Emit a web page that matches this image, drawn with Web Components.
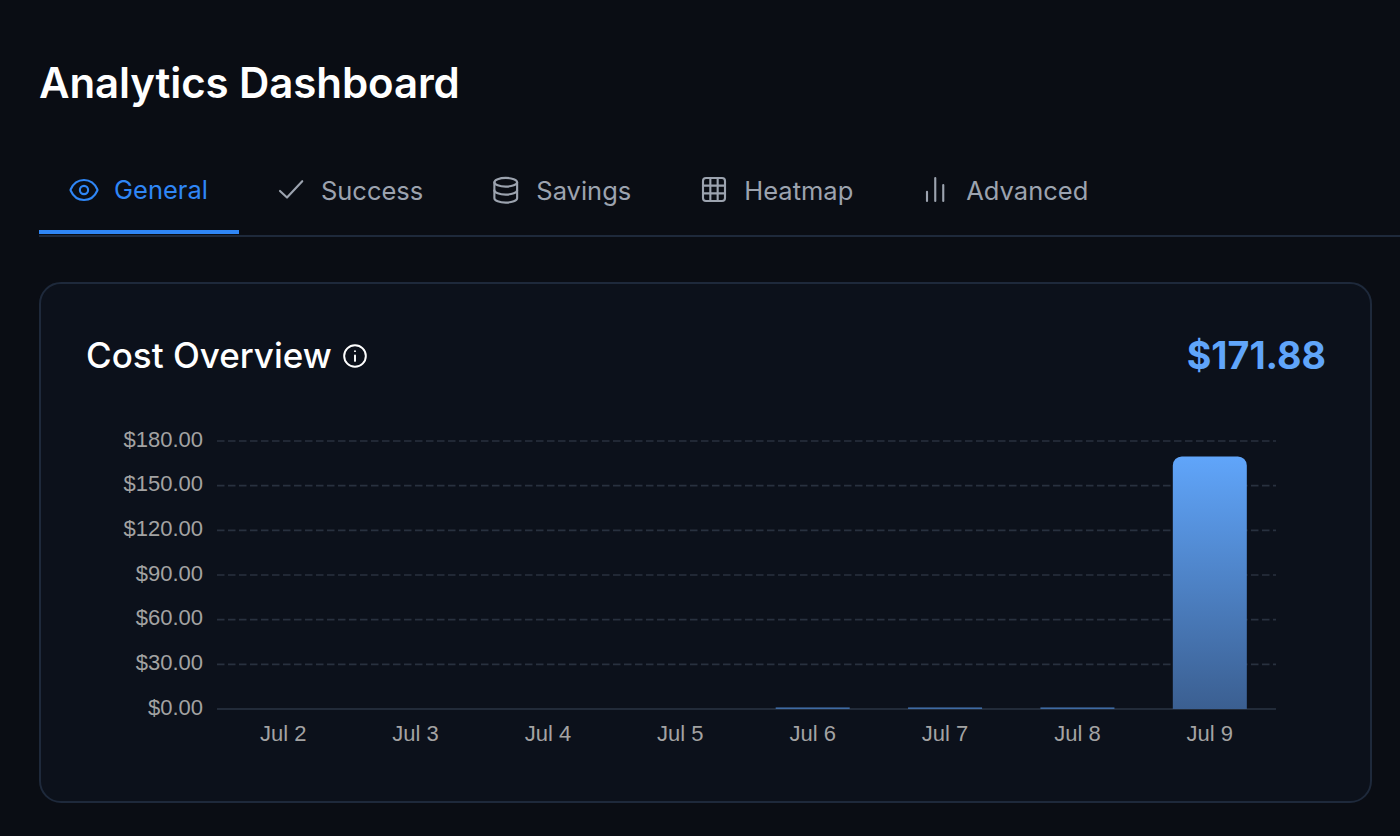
<!DOCTYPE html>
<html lang="en">
<head>
<meta charset="utf-8">
<title>Analytics Dashboard</title>
<style>
  html, body { margin: 0; background: #0a0d14; }
  body { font-family: Inter, "Liberation Sans", sans-serif; overflow: hidden; }
</style>
</head>
<body>
<dash-app>
  <span slot="title">Analytics Dashboard</span>
  <dash-tab slot="tabs" icon="eye" active>General</dash-tab>
  <dash-tab slot="tabs" icon="check">Success</dash-tab>
  <dash-tab slot="tabs" icon="database">Savings</dash-tab>
  <dash-tab slot="tabs" icon="table">Heatmap</dash-tab>
  <dash-tab slot="tabs" icon="bars">Advanced</dash-tab>
  <dash-card total="$171.88">
    <span slot="title">Cost Overview</span>
    <cost-chart></cost-chart>
  </dash-card>
</dash-app>

<script>
const ICONS = {
  eye: '<path d="M1.3 12.4a1 1 0 0 1 0-.8C3.2 7.3 7.2 4 12 4s8.8 3.3 10.7 7.6a1 1 0 0 1 0 .8C20.8 16.7 16.8 20 12 20s-8.8-3.3-10.7-7.6Z"/><circle cx="12" cy="12" r="3.3"/>',
  check: '<path d="M3.2 12.8 8.8 18 21 5"/>',
  database: '<ellipse cx="11.8" cy="5.8" rx="9.1" ry="3.5"/><path d="M2.7 5.8v12.8c0 1.95 4.07 3.5 9.1 3.5s9.1-1.55 9.1-3.5V5.8"/><path d="M2.7 12.2c0 1.95 4.07 3.5 9.1 3.5s9.1-1.55 9.1-3.5"/>',
  table: '<rect x="3.2" y="2.4" width="17.6" height="18.4" rx="2.4"/><path d="M3.2 8.5h17.6M3.2 14.7h17.6M9.07 2.4v18.4M14.93 2.4v18.4"/>',
  bars: '<path d="M4.8 20.8v-7.4M11.4 20.8V2.4M17.8 20.8V8"/>'
};

class DashApp extends HTMLElement {
  constructor() {
    super();
    this.attachShadow({ mode: "open" }).innerHTML = `
      <style>
        :host { display: block; padding: 55px 0 0 39px; box-sizing: border-box; height: 836px; }
        h1 { margin: 0; font-size: 42px; line-height: 56px; font-weight: 560; color: #fff; letter-spacing: -0.1px; }
        nav { display: flex; gap: 7px; margin-top: 62px; border-bottom: 2px solid #1e293b; height: 64px; box-sizing: border-box; }
        .content { margin-top: 45px; width: 1333px; }
      </style>
      <h1><slot name="title"></slot></h1>
      <nav><slot name="tabs"></slot></nav>
      <div class="content"><slot></slot></div>
    `;
  }
}

class DashTab extends HTMLElement {
  constructor() {
    super();
    const icon = ICONS[this.getAttribute("icon")] || "";
    this.attachShadow({ mode: "open" }).innerHTML = `
      <style>
        :host { display: flex; align-items: flex-start; gap: 15px; padding: 0 31px 0 30px; height: 61px; box-sizing: border-box; color: #9ca3af; font-size: 25.5px; line-height: 34px; font-weight: 430; }
        :host([active]) { color: #2f86f6; border-bottom: 4px solid #2f86f6; }
        svg { width: 30px; height: 30px; flex: none; margin-top: 2px; fill: none; stroke: currentColor; stroke-width: 1.7; stroke-linecap: round; stroke-linejoin: round; }
        span { padding-top: 1px; }
        :host([active]) span { padding-top: 0; }
      </style>
      <svg viewBox="0 0 24 24" aria-hidden="true">${icon}</svg>
      <span><slot></slot></span>
    `;
  }
}

class DashCard extends HTMLElement {
  constructor() {
    super();
    const total = this.getAttribute("total");
    this.attachShadow({ mode: "open" }).innerHTML = `
      <style>
        :host { display: block; box-sizing: border-box; height: 521px; padding: 48px 44px 0 45px; background: #0c111b; border: 2px solid #1e293b; border-radius: 22px; }
        header { display: flex; align-items: center; justify-content: space-between; height: 46px; }
        .title { display: flex; align-items: center; gap: 10px; color: #fff; font-size: 35px; font-weight: 500; }
        .total { color: #60a5fa; font-size: 37.6px; font-weight: 700; margin-top: 1px; }
        svg { width: 26px; height: 26px; margin-top: 1px; fill: none; stroke: #fff; stroke-width: 1.8; stroke-linecap: round; }
        .chart { margin-top: 43px; }
      </style>
      <header>
        <div class="title">
          <slot name="title"></slot>
          <svg viewBox="0 0 24 24" aria-hidden="true"><circle cx="12" cy="12" r="10"/><path d="M12 11.5v5M12 7.5v.01"/></svg>
        </div>
        <div class="total">${total}</div>
      </header>
      <div class="chart"><slot></slot></div>
    `;
  }
}

class CostChart extends HTMLElement {
  constructor() {
    super();
    const top = 20, bottom = 288, left = 131, right = 1190;
    const ticks = ["$180.00", "$150.00", "$120.00", "$90.00", "$60.00", "$30.00", "$0.00"];
    const days = ["Jul 2", "Jul 3", "Jul 4", "Jul 5", "Jul 6", "Jul 7", "Jul 8", "Jul 9"];
    const values = [0, 0, 0, 0, 0.25, 0.45, 0.25, 169.6];
    const step = (right - left) / days.length;
    const scale = (bottom - top) / 180;
    let grid = "", bars = "", labels = "";
    ticks.forEach((t, i) => {
      const y = top + i * (bottom - top) / 6;
      if (i < 6) grid += `<line x1="${left}" x2="${right}" y1="${y}" y2="${y}" stroke-dasharray="7.5 3.5"/>`;
      else grid += `<line class="axis" x1="${left}" x2="${right}" y1="${y}" y2="${y}"/>`;
      labels += `<text x="${left - 14}" y="${y + 5.5}" text-anchor="end">${t}</text>`;
    });
    days.forEach((d, i) => {
      const cx = left + step * (i + 0.5);
      labels += `<text x="${cx}" y="${bottom + 32}" text-anchor="middle">${d}</text>`;
      const h = values[i] * scale;
      if (h > 20) {
        const x = cx - 37, y = bottom - h, r = 9;
        bars += `<path fill="url(#bar)" d="M${x} ${bottom}V${y + r}a${r} ${r} 0 0 1 ${r}-${r}h${74 - 2 * r}a${r} ${r} 0 0 1 ${r} ${r}V${bottom}Z"/>`;
      } else if (h > 0) {
        bars += `<rect x="${cx - 37}" y="${bottom - 1.6}" width="74" height="1.6" fill="#3f6ba3"/>`;
      }
    });
    this.attachShadow({ mode: "open" }).innerHTML = `
      <style>
        :host { display: block; }
        svg { display: block; width: 1241px; height: 340px; }
        line { stroke: #28313f; stroke-width: 1.6; }
        line.axis { stroke: #2a3444; stroke-width: 1.6; }
        text { font-family: "Liberation Sans", Arial, sans-serif; font-size: 22px; fill: #a3a3a3; }
      </style>
      <svg viewBox="0 0 1241 340" role="img" aria-label="Cost per day">
        <defs>
          <linearGradient id="bar" x1="0" y1="0" x2="0" y2="1">
            <stop offset="0" stop-color="#60a5fa"/>
            <stop offset="1" stop-color="#3b5f91"/>
          </linearGradient>
        </defs>
        ${grid}${bars}${labels}
      </svg>
    `;
  }
}

customElements.define("dash-app", DashApp);
customElements.define("dash-tab", DashTab);
customElements.define("dash-card", DashCard);
customElements.define("cost-chart", CostChart);
</script>
</body>
</html>
